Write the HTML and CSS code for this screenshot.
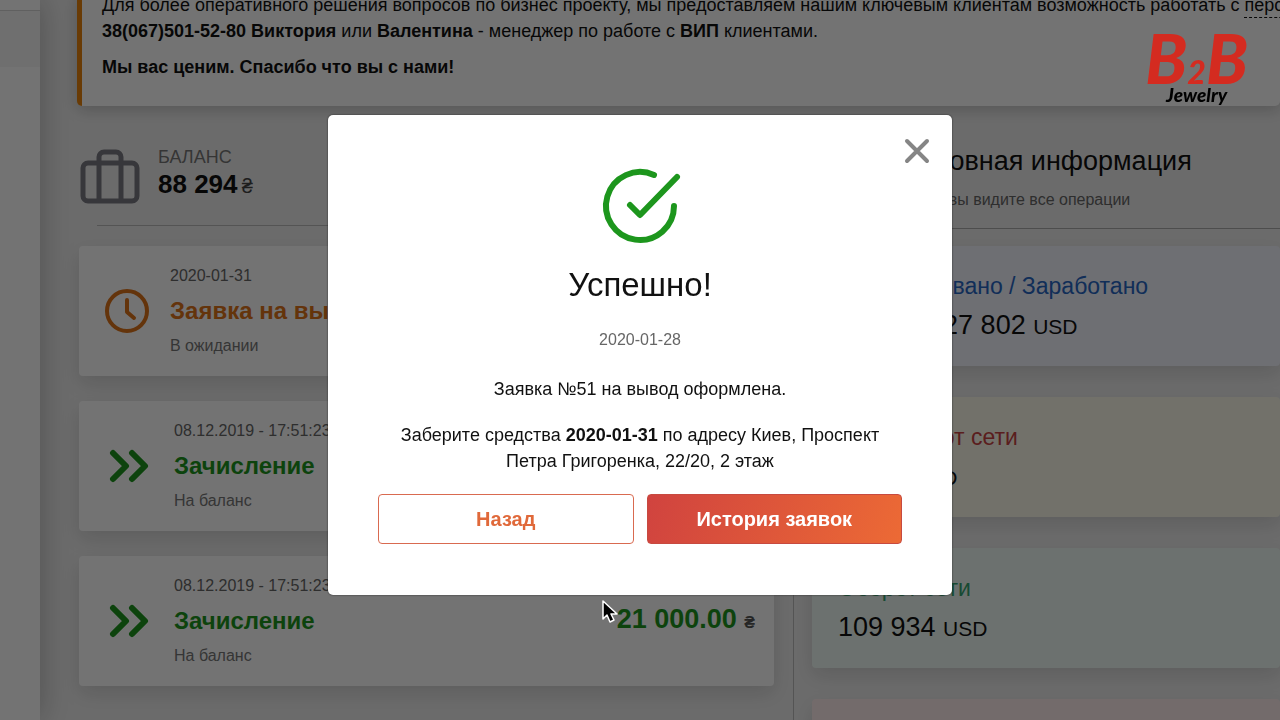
FILE: index.html
```html
<!doctype html>
<html lang="ru">
  <head>
    <meta charset="UTF-8" />
    <meta name="viewport" content="width=device-width, initial-scale=1.0" />
    <title>B2B Jewelry</title>
    <link rel="stylesheet" href="styles.css">
  </head>
  <body>
    <div class="page">
      <aside class="sidebar">
        <div class="sidebar-active"></div>
      </aside>

      <main class="content">
        <section class="notice">
          <p>
            Для более оперативного решения вопросов по бизнес проекту, мы предоставляем нашим ключевым клиентам возможность работать с <span class="hint">персональным</span><br />
            <b>38(067)501-52-80 Виктория</b> или <b>Валентина</b> - менеджер по работе с <b>ВИП</b> клиентами.
          </p>
          <p><b>Мы вас ценим. Спасибо что вы с нами!</b></p>
        </section>

        <div class="columns">
          <section class="operations">
            <div class="balance">
              <svg class="balance-icon" viewBox="0 0 60 56" fill="none" stroke="#7b7b83" stroke-width="5">
                <rect x="3" y="14" width="54" height="38" rx="5" />
                <path d="M19 52V8a5 5 0 0 1 5-5h12a5 5 0 0 1 5 5v44" />
              </svg>
              <div>
                <div class="balance-label">БАЛАНС</div>
                <div class="balance-value">88 294 <small>₴</small></div>
              </div>
            </div>
            <hr class="rule" />

            <article class="operation pending">
              <svg class="operation-icon" viewBox="0 0 44 44" fill="none" stroke="currentColor" stroke-width="4" stroke-linecap="round" stroke-linejoin="round">
                <circle cx="22" cy="22" r="20" />
                <path d="M22 11v12l7 6" />
              </svg>
              <div class="operation-text">
                <div class="date">2020-01-31</div>
                <h3>Заявка на вывод</h3>
                <div class="state">В ожидании</div>
              </div>
            </article>

            <article class="operation income">
              <svg class="operation-icon" viewBox="0 0 44 44" fill="none" stroke="currentColor" stroke-width="6" stroke-linecap="round" stroke-linejoin="round">
                <path d="M8 9l13 13L8 35M27 9l13 13-13 13" />
              </svg>
              <div class="operation-text">
                <div class="date">08.12.2019 - 17:51:23</div>
                <h3>Зачисление</h3>
                <div class="state">На баланс</div>
              </div>
            </article>

            <article class="operation income">
              <svg class="operation-icon" viewBox="0 0 44 44" fill="none" stroke="currentColor" stroke-width="6" stroke-linecap="round" stroke-linejoin="round">
                <path d="M8 9l13 13L8 35M27 9l13 13-13 13" />
              </svg>
              <div class="operation-text">
                <div class="date">08.12.2019 - 17:51:23</div>
                <h3>Зачисление</h3>
                <div class="state">На баланс</div>
              </div>
              <div class="amount">21 000.00 <small>₴</small></div>
            </article>
          </section>

          <section class="info">
            <header class="info-header">
              <h2>Основная информация</h2>
              <p>Здесь вы видите все операции</p>
            </header>

            <article class="stat stat-blue">
              <h3>Инвестировано / Заработано</h3>
              <div>50 000 / 27 802 <small>USD</small></div>
            </article>
            <article class="stat stat-yellow">
              <h3>Прибыль от сети</h3>
              <div>5 284 <small>USD</small></div>
            </article>
            <article class="stat stat-green">
              <h3>Оборот сети</h3>
              <div>109 934 <small>USD</small></div>
            </article>
            <article class="stat stat-red"></article>
          </section>
        </div>
      </main>
    </div>

    <div class="overlay">
      <div class="modal" role="dialog" aria-modal="true" aria-labelledby="modalTitle">
        <button class="close" type="button" aria-label="Закрыть">
          <svg viewBox="0 0 26 26" fill="none" stroke="#858585" stroke-width="4" stroke-linecap="round">
            <path d="M3 3l20 20M23 3L3 23" />
          </svg>
        </button>
        <svg class="success-icon" viewBox="0 0 80 76" fill="none" stroke="#1d961d" stroke-width="6" stroke-linecap="round" stroke-linejoin="round">
          <path d="M54 6A34 34 0 1 0 74 37" />
          <path d="M30 36L40 46L77 8" />
        </svg>
        <h1 id="modalTitle">Успешно!</h1>
        <div class="modal-date">2020-01-28</div>
        <p>Заявка №51 на вывод оформлена.</p>
        <p>Заберите средства <b>2020-01-31</b> по адресу Киев, Проспект Петра Григоренка, 22/20, 2 этаж</p>
        <div class="actions">
          <button class="btn btn-outline" type="button">Назад</button>
          <button class="btn btn-primary" type="button">История заявок</button>
        </div>
      </div>
    </div>

    <div class="logo">
      <div class="logo-name">B<small>2</small>B</div>
      <div class="logo-sub">Jewelry</div>
    </div>

    <svg class="cursor" viewBox="0 0 16 24">
      <path d="M1 1v18l4-4 3 7 4-2-3-6h6z" fill="#000" stroke="#fff" stroke-width="1.500" stroke-linejoin="round" />
    </svg>
  </body>
</html>
```
FILE: styles.css
```css
* {
  box-sizing: border-box;
}
body {
  margin: 0;
  height: 100vh;
  overflow: hidden;
  background: #eeeeee;
  color: #111;
  font-family: "Liberation Sans", Arial, sans-serif;
  font-size: 18px;
  line-height: 26px;
}
h1,
h2,
h3,
p {
  margin: 0;
  font-weight: normal;
}

/* page */
.page {
  display: flex;
  height: 100vh;
  overflow: hidden;
}
.sidebar {
  flex: none;
  width: 40px;
  padding-top: 10px;
  background: #fff;
  box-shadow: 0 0 32px rgba(0, 0, 0, 0.25);
}
.sidebar-active {
  height: 57px;
  background: #f6f6f6;
  border-top: 1px solid #d5d5d5;
}
.content {
  flex: 1;
  min-width: 0;
  padding-left: 37px;
}
.notice {
  margin-top: -8px;
  padding: 0 0 26px 20px;
  border-left: 5px solid #e8830c;
  border-radius: 5px;
  background: #fff;
  box-shadow: 0 4px 16px rgba(0, 0, 0, 0.2);
  white-space: nowrap;
}
.notice p {
  margin-bottom: 10px;
}
.notice p:last-child {
  margin-bottom: 0;
}
.hint {
  text-decoration: underline dashed 1px;
  text-underline-offset: 6px;
}

.columns {
  display: grid;
  grid-template-columns: 717px 1fr;
  margin-top: 19px;
}
.operations {
  padding-right: 19px;
  border-right: 1px solid #bbb;
}
.balance {
  display: flex;
  gap: 18px;
  height: 100px;
  margin-left: 3px;
  padding-top: 19px;
}
.balance-icon {
  width: 60px;
  height: 56px;
  margin-top: 5px;
}
.balance-label {
  color: #777;
}
.balance-value {
  font-size: 26px;
  font-weight: bold;
  line-height: 28px;
}
.balance-value small {
  margin-left: -3px;
  color: #444;
  font-size: 20px;
  font-weight: normal;
}
.rule {
  margin: 0 0 20px 20px;
  border: none;
  border-top: 1px solid #bbb;
}

.operation {
  display: flex;
  align-items: center;
  gap: 21px;
  height: 130px;
  margin: 0 0 25px 2px;
  padding: 0 19px 0 26px;
  border-radius: 4px;
  background: #fff;
  box-shadow: 0 8px 20px rgba(0, 0, 0, 0.12);
}
.operation-icon {
  width: 44px;
  height: 44px;
}
.operation-text {
  flex: 1;
}
.operation h3 {
  font-size: 24px;
  font-weight: bold;
  line-height: 46px;
}
.operation .date,
.operation .state {
  font-size: 16px;
  line-height: 24px;
}
.date {
  color: #666;
}
.state {
  color: #777;
}
.pending h3,
.pending .operation-icon {
  color: #dd731a;
}
.income {
  gap: 25px;
}
.income h3,
.income .operation-icon,
.amount {
  color: #1d961d;
}
.amount {
  font-size: 27px;
  font-weight: bold;
}
.amount small {
  color: #555;
  font-size: 16px;
}

.info {
  padding-left: 18px;
}
.info-header {
  height: 104px;
  margin-bottom: 17px;
  padding: 18px 0 0 88px;
  border-bottom: 1px solid #aaa;
}
.info-header h2 {
  font-size: 27px;
  line-height: 36px;
}
.info-header p {
  padding-top: 8px;
  color: #666;
  font-size: 16px;
}
.stat {
  height: 120px;
  margin-bottom: 31px;
  padding: 20px 26px;
  border-radius: 4px;
  box-shadow: 0 8px 20px rgba(0, 0, 0, 0.12);
}
.stat h3 {
  font-size: 23px;
  line-height: 40px;
}
.stat div {
  font-size: 27px;
  line-height: 38px;
}
.stat small {
  font-size: 21px;
}
.stat-blue {
  background: #f3f5ff;
}
.stat-blue h3 {
  color: #2766c4;
}
.stat-yellow {
  background: #fcfbec;
}
.stat-yellow h3 {
  color: #c84343;
}
.stat-green {
  background: #f0fbf5;
}
.stat-green h3 {
  color: #36a571;
}
.stat-red {
  background: #ffeeee;
}

/* modal */
.overlay {
  position: fixed;
  inset: 0;
  display: flex;
  justify-content: center;
  align-items: flex-start;
  padding-top: 115px;
  background: rgba(0, 0, 0, 0.55);
}
.modal {
  position: relative;
  width: 624px;
  padding: 54px 50px 51px;
  border-radius: 5px;
  background: #fff;
  box-shadow: 0 0 2px #222;
  text-align: center;
}
.close {
  position: absolute;
  top: 23px;
  right: 22px;
  width: 26px;
  height: 26px;
  padding: 0;
  border: none;
  background: none;
  cursor: pointer;
}
.success-icon {
  display: block;
  width: 80px;
  height: 76px;
  margin: 0 auto;
  overflow: visible;
}
.modal h1 {
  padding-top: 16px;
  font-size: 33px;
  line-height: 48px;
}
.modal-date {
  margin: 18px 0 23px;
  color: #666;
  font-size: 16px;
}
.modal p {
  margin-bottom: 20px;
}
.actions {
  display: flex;
  gap: 13px;
}
.btn {
  flex: 1;
  height: 50px;
  border: 1px solid #d96a50;
  border-radius: 4px;
  font-family: inherit;
  font-size: 20px;
  font-weight: bold;
  cursor: pointer;
}
.btn-outline {
  background: #fff;
  color: #e0693a;
}
.btn-primary {
  border-color: #c74a40;
  background: linear-gradient(110deg, #d0433f, #ec6a35);
  color: #fff;
}

/* logo stays above the modal */
.logo {
  position: fixed;
  top: 28px;
  right: 32px;
  font-family: Lato, sans-serif;
  font-style: italic;
  font-weight: 900;
  text-align: center;
}
.logo-name {
  height: 58px;
  color: #d42b20;
  font-size: 68px;
  line-height: 60px;
}
.logo-name small {
  font-size: 32px;
  line-height: 1;
}
.logo-sub {
  color: #000;
  font-size: 19px;
  line-height: 18px;
}
.cursor {
  position: fixed;
  top: 600px;
  left: 602px;
  width: 16px;
  height: 24px;
}
```
